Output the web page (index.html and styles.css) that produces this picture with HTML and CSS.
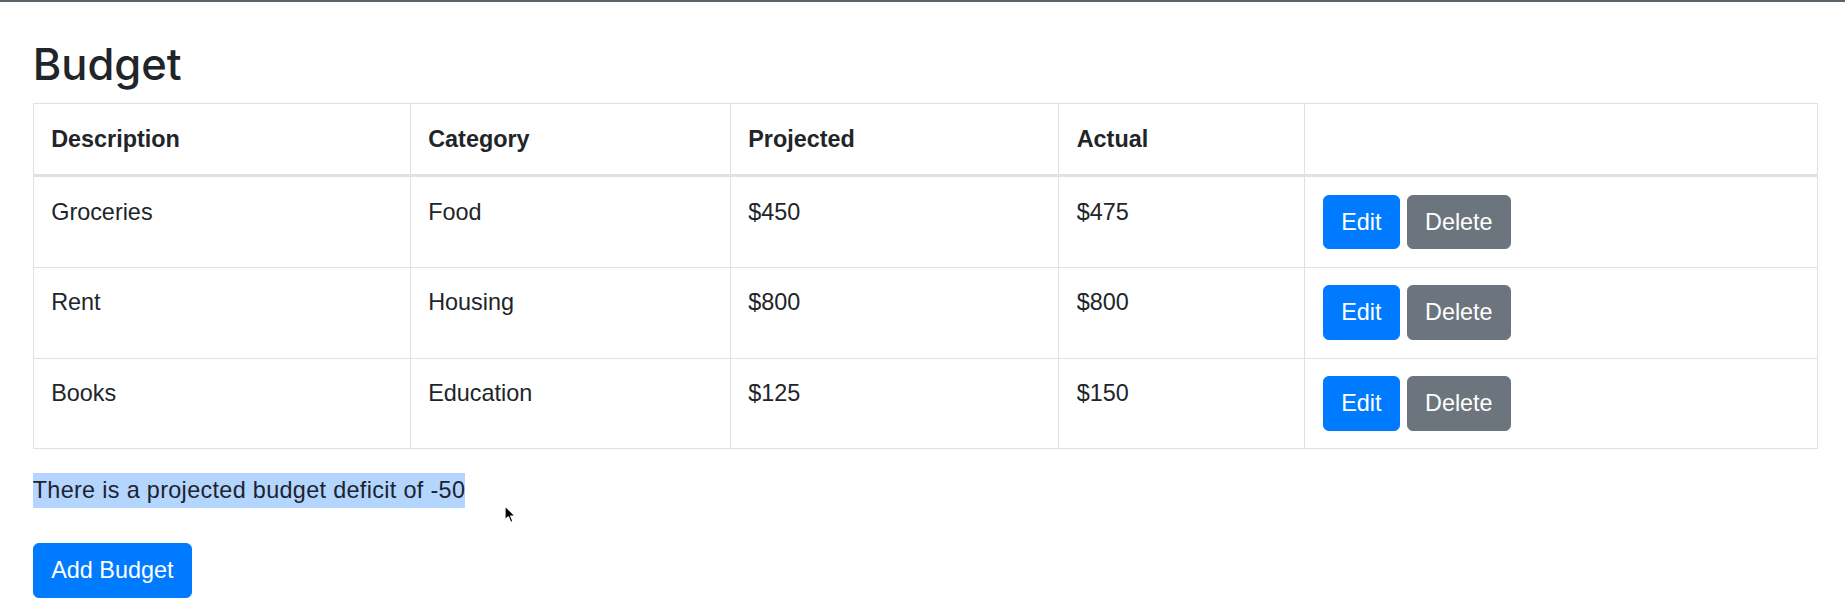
FILE: index.html
```html
<!DOCTYPE html>
<html lang="en">
<head>
<meta charset="utf-8">
<title>Budget</title>
<link rel="stylesheet" href="styles.css">
</head>
<body>
<div class="topbar"></div>
<main class="page">
  <h1 class="title">Budget</h1>
  <table class="budget-table">
    <colgroup>
      <col class="c-desc">
      <col class="c-cat">
      <col class="c-proj">
      <col class="c-act">
      <col class="c-btn">
    </colgroup>
    <thead>
      <tr>
        <th>Description</th>
        <th>Category</th>
        <th>Projected</th>
        <th>Actual</th>
        <th></th>
      </tr>
    </thead>
    <tbody>
      <tr>
        <td>Groceries</td>
        <td>Food</td>
        <td>$450</td>
        <td>$475</td>
        <td><button class="btn btn-primary">Edit</button> <button class="btn btn-secondary">Delete</button></td>
      </tr>
      <tr>
        <td>Rent</td>
        <td>Housing</td>
        <td>$800</td>
        <td>$800</td>
        <td><button class="btn btn-primary">Edit</button> <button class="btn btn-secondary">Delete</button></td>
      </tr>
      <tr>
        <td>Books</td>
        <td>Education</td>
        <td>$125</td>
        <td>$150</td>
        <td><button class="btn btn-primary">Edit</button> <button class="btn btn-secondary">Delete</button></td>
      </tr>
    </tbody>
  </table>
  <p class="summary"><span class="hl">There is a projected budget deficit of -50</span></p>
  <button class="btn btn-primary">Add Budget</button>
</main>
<svg class="cursor" width="13" height="19" viewBox="0 0 13 19" aria-hidden="true">
  <path d="M1 1 L1 15 L4.4 11.8 L6.8 17.4 L9 16.4 L6.7 11 L11.2 11 Z" fill="#000" stroke="#fff" stroke-width="1.2" stroke-linejoin="round"/>
</svg>
</body>
</html>
```

FILE: styles.css
```css
html, body {
  margin: 0;
  padding: 0;
  background: #ffffff;
}

body {
  font-family: "Liberation Sans", Arial, Helvetica, sans-serif;
  font-size: 23.4px;
  line-height: 35px;
  color: #212529;
  position: relative;
  min-height: 612px;
}

.topbar {
  height: 2px;
  background: #59636a;
}

.page {
  padding: 35.6px 27px 0 32.7px;
}

.title {
  margin: 0 0 13px 0;
  font-family: "Inter", "Liberation Sans", Arial, sans-serif;
  font-size: 43.5px;
  line-height: 52.8px;
  font-weight: 500;
  letter-spacing: 0;
  color: #212529;
}

.budget-table {
  width: 1785px;
  table-layout: fixed;
  border-collapse: collapse;
  margin: 0 0 24px 0;
}

.c-desc { width: 377px; }
.c-cat { width: 320px; }
.c-proj { width: 328.5px; }
.c-act { width: 246px; }

.budget-table th,
.budget-table td {
  border: 1.5px solid #dee2e6;
  padding: 17.5px;
  vertical-align: top;
  text-align: left;
  font-size: 23.4px;
  line-height: 35px;
}

.budget-table th {
  font-weight: 700;
}

.budget-table thead th {
  border-bottom: 3px solid #dee2e6;
}

.btn {
  display: inline-block;
  margin: 0;
  padding: 8.8px 17.5px;
  font-family: inherit;
  font-size: 23.4px;
  line-height: 35px;
  font-weight: 400;
  color: #ffffff;
  border: 1.46px solid transparent;
  border-radius: 5.85px;
  vertical-align: middle;
  cursor: pointer;
}

.btn-primary {
  background: #007bff;
  border-color: #007bff;
}

.btn-secondary {
  background: #6c757d;
  border-color: #6c757d;
}

.summary {
  margin: 0 0 35px 0;
}

.hl {
  display: inline-block;
  background: #b4d5fd;
  color: #1b2430;
  letter-spacing: 0.33px;
}

.cursor {
  position: absolute;
  left: 504px;
  top: 505px;
}
```
